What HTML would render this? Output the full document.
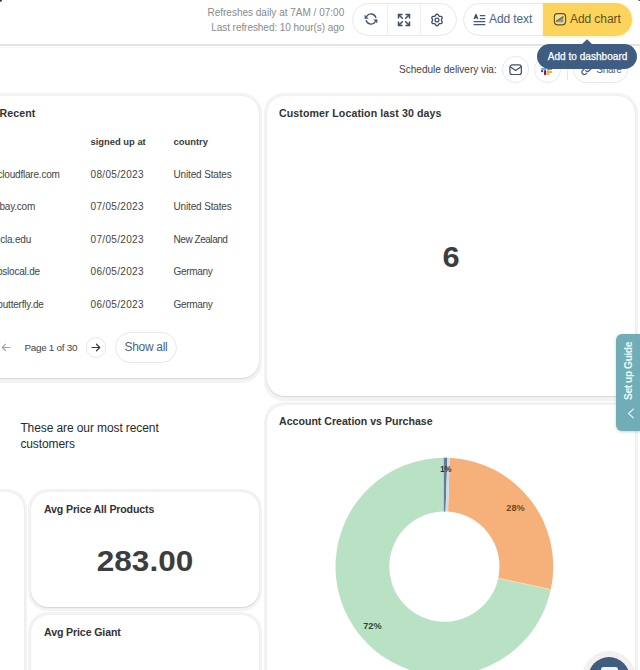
<!DOCTYPE html>
<html>
<head>
<meta charset="utf-8">
<title>Dashboard</title>
<style>
*{box-sizing:border-box;margin:0;padding:0}
html,body{width:640px;height:670px;overflow:hidden;background:#fff}
body{font-family:"Liberation Sans",sans-serif;color:#3a3a3a;position:relative}
.abs{position:absolute;white-space:nowrap}
.card{position:absolute;background:#f3f3f3;border-radius:20px}
.card::after{content:"";position:absolute;left:3.1px;top:3px;right:3.1px;bottom:4.7px;border-radius:17px;background:#fff;box-shadow:0 1px 1.1px rgba(0,0,0,.115),0 0 .9px rgba(0,0,0,.1)}
.pill{position:absolute;border:1px solid #e6e8ec;background:#fff;border-radius:17px}
.t{position:absolute;white-space:nowrap;line-height:1}
.b{font-weight:bold}
.cell{font-size:10px;color:#444}
.c1{letter-spacing:-.2px}
.c2{letter-spacing:.33px;left:90.5px}
.c3{letter-spacing:-.15px;left:173.5px}
.hd{font-size:9.4px;font-weight:bold;color:#3a3a3a;letter-spacing:0}
.ttl{font-size:10.6px;font-weight:bold;color:#333;letter-spacing:.1px}
</style>
</head>
<body>

<!-- header -->
<div class="t" style="right:295.8px;top:8.4px;font-size:10px;color:#8a8a8a;letter-spacing:0">Refreshes daily at 7AM / 07:00</div>
<div class="t" style="right:295.8px;top:22.6px;font-size:10px;color:#8a8a8a;letter-spacing:-.05px">Last refreshed: 10 hour(s) ago</div>

<div class="pill" style="left:351.5px;top:3px;width:105.5px;height:33px"></div>
<div class="abs" style="left:387px;top:3.5px;width:1px;height:32px;background:#eceef1"></div>
<div class="abs" style="left:419.8px;top:3.5px;width:1px;height:32px;background:#eceef1"></div>

<!-- refresh icon -->
<svg class="abs" style="left:363.05px;top:11.2px" width="16" height="16" viewBox="-8 -8 16 16" fill="none" stroke="#3d516b" stroke-width="1.3" stroke-linecap="round">
  <path d="M4.85 -1.35A5 5 0 0 0 -4.3 -2.55"/>
  <path d="M-4.85 1.55A5 5 0 0 0 4.3 2.6"/>
  <path d="M-6.15 -3.5V-.5H-3.1Z" fill="#3d516b" stroke="#3d516b" stroke-width=".5" stroke-linejoin="round"/>
  <path d="M6.15 3.6V.7H3.1Z" fill="#3d516b" stroke="#3d516b" stroke-width=".5" stroke-linejoin="round"/>
</svg>
<!-- expand icon -->
<svg class="abs" style="left:397.1px;top:12.8px" width="14" height="14" viewBox="-7 -7 14 14" fill="none" stroke="#3d516b" stroke-width="1.5" stroke-linecap="butt" stroke-linejoin="miter">
  <path d="M-5.5 -1.4V-5.5H-1.4M-5.5 -5.5L-1.2 -1.2"/>
  <path d="M5.5 -1.4V-5.5H1.4M5.5 -5.5L1.2 -1.2"/>
  <path d="M-5.5 1.4V5.5H-1.4M-5.5 5.5L-1.2 1.2"/>
  <path d="M5.5 1.4V5.5H1.4M5.5 5.5L1.2 1.2"/>
</svg>
<!-- gear icon -->
<svg class="abs" style="left:429px;top:11.9px" width="16" height="16" viewBox="-8 -8 16 16" fill="none" stroke="#3d516b" stroke-width="1.3" stroke-linejoin="round">
  <circle cx="0" cy="0" r="1.9"/>
  <path d="M4.42 0.00L4.44 0.29L4.51 0.59L4.63 0.92L4.93 1.32L5.19 1.76L5.22 2.16L5.16 2.54L5.01 2.89L4.78 3.19L4.48 3.44L4.12 3.61L3.61 3.61L3.11 3.55L2.77 3.61L2.47 3.70L2.21 3.83L1.97 3.99L1.74 4.20L1.52 4.47L1.32 4.93L1.07 5.38L0.74 5.60L0.38 5.74L0.00 5.78L-0.38 5.74L-0.74 5.60L-1.07 5.38L-1.32 4.93L-1.52 4.47L-1.74 4.20L-1.97 3.99L-2.21 3.83L-2.47 3.70L-2.77 3.61L-3.11 3.55L-3.61 3.61L-4.12 3.61L-4.48 3.44L-4.78 3.19L-5.01 2.89L-5.16 2.54L-5.22 2.16L-5.19 1.76L-4.93 1.32L-4.63 0.92L-4.51 0.59L-4.44 0.29L-4.42 0.00L-4.44 -0.29L-4.51 -0.59L-4.63 -0.92L-4.93 -1.32L-5.19 -1.76L-5.22 -2.16L-5.16 -2.54L-5.01 -2.89L-4.78 -3.19L-4.48 -3.44L-4.12 -3.61L-3.61 -3.61L-3.11 -3.55L-2.77 -3.61L-2.47 -3.70L-2.21 -3.83L-1.97 -3.99L-1.74 -4.20L-1.52 -4.47L-1.32 -4.93L-1.07 -5.38L-0.74 -5.60L-0.38 -5.74L-0.00 -5.78L0.38 -5.74L0.74 -5.60L1.07 -5.38L1.32 -4.93L1.52 -4.47L1.74 -4.20L1.97 -3.99L2.21 -3.83L2.47 -3.70L2.77 -3.61L3.11 -3.55L3.61 -3.61L4.12 -3.61L4.48 -3.44L4.78 -3.19L5.01 -2.89L5.16 -2.54L5.22 -2.16L5.19 -1.76L4.93 -1.32L4.63 -0.92L4.51 -0.59L4.44 -0.29Z"/>
</svg>

<!-- add text / add chart -->
<div class="pill" style="left:462.5px;top:3px;width:150px;height:33px"></div>
<div class="abs" style="left:543.4px;top:3.3px;width:88.4px;height:33.1px;background:#fdd45b;border-radius:0 16.5px 16.5px 0;border-left:1.6px solid #ddd3b6;box-shadow:0 .5px 3px rgba(253,212,91,.55)"></div>
<div class="abs" style="left:638.2px;top:-1.8px;width:4px;height:3px;border-radius:50%;background:#4a4a4a"></div>
<div class="abs" style="left:-2px;top:-2px;width:3.6px;height:3.6px;border-radius:50%;background:#4a4a4a"></div>
<div class="abs" style="left:-2px;top:668.4px;width:3.6px;height:3.6px;border-radius:50%;background:#4a4a4a"></div>
<svg class="abs" style="left:473px;top:13px" width="13" height="13" viewBox="473 13 13 13" fill="none" stroke="#3f5a7c" stroke-width="1.25" stroke-linecap="butt">
  <path d="M479.8 15.5H485.3M479.8 18.5H485.3M473.6 21.5H485.3M473.6 24.5H485.3"/>
  <path d="M474.25 18.9L475.95 14.55L477.65 18.9M474.9 17.5H477" stroke-width="1.4" stroke="#46505e" stroke-linejoin="round"/>
</svg>
<div class="t" style="left:489px;top:13px;font-size:12px;color:#4a6585;letter-spacing:-.1px">Add text</div>
<!-- chart icon -->
<svg class="abs" style="left:553px;top:12px" width="14" height="14" viewBox="553 12 14 14" fill="none">
  <rect x="554.4" y="13.65" width="11.2" height="11.2" rx="3" fill="#f0dd98" stroke="#67510f" stroke-width="1.15"/>
  <path d="M556.4 22.3L563.3 17V22.3Z" fill="#8d9496"/>
  <path d="M556.3 21.3L563.1 16.7" stroke="#76580c" stroke-width="1.15" stroke-linecap="round"/>
</svg>
<div class="t" style="left:570px;top:13px;font-size:12px;color:#5c5126;letter-spacing:-.08px">Add chart</div>

<!-- header border -->
<div class="abs" style="left:0;top:44px;width:640px;height:2px;background:#e5e5e5"></div>
<div class="abs" style="left:0;top:47px;width:640px;height:1px;background:#f6f7f9"></div>

<!-- schedule row -->
<div class="t" style="left:399px;top:65.1px;font-size:10.1px;color:#444;letter-spacing:-.02px">Schedule delivery via:</div>
<div class="pill" style="left:502px;top:56px;width:26.5px;height:26.5px;border-radius:50%"></div>
<svg class="abs" style="left:508.5px;top:63.8px" width="13.3" height="11.6" viewBox="0 0 29 25" fill="none" stroke="#42536b" stroke-width="2.800" stroke-linejoin="round" stroke-linecap="round">
  <rect x="2" y="2" width="25" height="21" rx="5"/>
  <path d="M3.500 6.500L14.500 14l11-7.500"/>
</svg>
<div class="pill" style="left:534px;top:56px;width:26.5px;height:26.5px;border-radius:50%"></div>
<!-- slack-ish logo -->
<svg class="abs" style="left:541px;top:64.3px" width="11.3" height="11.3" viewBox="0 0 26 26">
  <rect x="9" y="0" width="5" height="12" rx="2.500" fill="#36c5f0"/>
  <rect x="0" y="9" width="12" height="5" rx="2.500" fill="#36c5f0"/>
  <rect x="14" y="0" width="5" height="5" rx="2.500" fill="#2eb67d"/>
  <rect x="14" y="9" width="12" height="5" rx="2.500" fill="#2eb67d"/>
  <rect x="0" y="14" width="5" height="5" rx="2.500" fill="#8f1442"/>
  <rect x="7" y="14" width="5" height="12" rx="2.500" fill="#8f1442"/>
  <rect x="14" y="14" width="5" height="12" rx="2.500" fill="#ecb22e"/>
  <rect x="14" y="16" width="12" height="5" rx="2.500" fill="#ecb22e"/>
</svg>
<div class="abs" style="left:567px;top:60px;width:1px;height:20px;background:#e8e8e8"></div>
<div class="pill" style="left:573px;top:56px;width:55px;height:26.5px;border-radius:14px"></div>
<svg class="abs" style="left:581.2px;top:63.7px" width="11.5" height="11.5" viewBox="0 0 24 24" fill="none" stroke="#4a6585" stroke-width="2.800" stroke-linecap="round">
  <path d="M10 14a5 5 0 0 0 7 0l4-4a5 5 0 0 0-7-7l-1.500 1.500"/><path d="M14 10a5 5 0 0 0-7 0l-4 4a5 5 0 0 0 7 7l1.500-1.500"/>
</svg>
<div class="t" style="left:596.3px;top:65px;font-size:10px;color:#4a6585;letter-spacing:-.3px">Share</div>

<!-- tooltip -->
<div class="abs" style="left:537px;top:43.500px;width:100px;height:25.500px;border-radius:13px;background:#3f5d82"></div>
<svg class="abs" style="left:581px;top:38.500px" width="12" height="6" viewBox="0 0 12 6"><path d="M0 6L6 .3 12 6z" fill="#3f5d82"/></svg>
<div class="t" style="left:547.8px;top:51.7px;font-size:10px;color:#fff;letter-spacing:.04px;-webkit-text-stroke:.25px #fff">Add to dashboard</div>

<!-- cards -->
<div class="card" style="left:-30px;top:93px;width:292.3px;height:289.7px"></div>
<div class="card" style="left:263.9px;top:93px;width:374.1px;height:307.6px"></div>
<div class="card" style="left:263.9px;top:401.5px;width:374.1px;height:318.5px"></div>
<div class="card" style="left:-30px;top:489px;width:56.6px;height:231.0px"></div>
<div class="card" style="left:28.1px;top:489px;width:234.2px;height:122.4px"></div>
<div class="card" style="left:28.1px;top:612.1px;width:234.2px;height:127.9px"></div>

<!-- recent table -->
<div class="t ttl" style="left:-.5px;top:108px">Recent</div>
<div class="t hd" style="left:90.500px;top:137px">signed up at</div>
<div class="t hd" style="left:173.500px;top:137px">country</div>

<div class="t cell c1" style="right:580.3px;top:169.5px">cloudflare.com</div>
<div class="t cell c2" style="top:169.5px">08/05/2023</div>
<div class="t cell c3" style="top:169.5px">United States</div>

<div class="t cell c1" style="right:604.9px;top:202px">ebay.com</div>
<div class="t cell c2" style="top:202px">07/05/2023</div>
<div class="t cell c3" style="top:202px">United States</div>

<div class="t cell c1" style="right:609.0px;top:234.5px">ucla.edu</div>
<div class="t cell c2" style="top:234.5px">07/05/2023</div>
<div class="t cell c3" style="top:234.5px;letter-spacing:-.45px">New Zealand</div>

<div class="t cell c1" style="right:600.1px;top:267px">pslocal.de</div>
<div class="t cell c2" style="top:267px">06/05/2023</div>
<div class="t cell c3" style="top:267px;letter-spacing:-.33px">Germany</div>

<div class="t cell c1" style="right:596.3px;top:299.5px">butterfly.de</div>
<div class="t cell c2" style="top:299.5px">06/05/2023</div>
<div class="t cell c3" style="top:299.5px;letter-spacing:-.33px">Germany</div>

<!-- pagination -->
<svg class="abs" style="left:1px;top:343px" width="10" height="9" viewBox="0 0 20 18" fill="none" stroke="#a5a5a5" stroke-width="2.200" stroke-linecap="round" stroke-linejoin="round"><path d="M18 9H3M9 2.500L2.500 9 9 15.500"/></svg>
<div class="t" style="left:24.4px;top:342.8px;font-size:9.9px;color:#444;letter-spacing:-.27px">Page 1 of 30</div>
<div class="pill" style="left:85.7px;top:337.3px;width:20.5px;height:20.5px;border-radius:50%"></div>
<svg class="abs" style="left:91px;top:343px" width="10" height="9" viewBox="0 0 20 18" fill="none" stroke="#3c3c3c" stroke-width="2.400" stroke-linecap="round" stroke-linejoin="round"><path d="M2 9h15M11 2.500L17.500 9 11 15.500"/></svg>
<div class="pill" style="left:114.500px;top:331.500px;width:62px;height:31.500px;border-radius:16px"></div>
<div class="t" style="left:124.6px;top:341.4px;font-size:12px;color:#4a6585;letter-spacing:-.33px">Show all</div>

<!-- customer location -->
<div class="t ttl" style="left:279px;top:108px">Customer Location last 30 days</div>
<div class="t b" style="left:451.1px;top:242.3px;font-size:29.3px;color:#3d3d3d;transform:translateX(-50%) scaleX(1.05)">6</div>

<!-- note text -->
<div class="t" style="left:20.4px;top:421.8px;font-size:12px;color:#2a2a2a;letter-spacing:-.1px">These are our most recent</div>
<div class="t" style="left:20.4px;top:437.8px;font-size:12px;color:#2a2a2a;letter-spacing:-.1px">customers</div>

<!-- avg price -->
<div class="t ttl" style="left:44px;top:504px;letter-spacing:-.15px">Avg Price All Products</div>
<div class="t b" style="left:145.3px;top:546.3px;font-size:29.3px;color:#3d3d3d;transform:translateX(-50%) scaleX(1.075)">283.00</div>
<div class="t ttl" style="left:44px;top:627px;letter-spacing:-.12px">Avg Price Giant</div>

<!-- donut -->
<div class="t ttl" style="left:279px;top:416.3px;letter-spacing:0">Account Creation vs Purchase</div>
<svg class="abs" style="left:263.500px;top:401px" width="374.500" height="269" viewBox="263.500 401 374.500 269">
  <path d="M550.36 589.52A108.9 108.9 0 1 1 443.80 457.70L443.80 511.50A55.1 55.1 0 1 0 497.77 578.20Z" fill="#b9e2c4"/>
<path d="M449.15 457.83A108.9 108.9 0 0 1 550.36 589.52L497.77 578.20A55.1 55.1 0 0 0 447.55 511.58Z" fill="#f6b079"/>
<path d="M443.80 457.70A108.9 108.9 0 0 1 446.85 457.74L445.05 511.51A55.1 55.1 0 0 0 443.80 511.50Z" fill="#5f7b9b"/>
<path d="M446.85 457.74A108.9 108.9 0 0 1 449.15 457.83L447.55 511.58A55.1 55.1 0 0 0 445.05 511.51Z" fill="#d0dbe9"/>
<path d="M550.36 589.52L497.77 578.20" stroke="#fbe3cf" stroke-width=".7"/>
<path d="M443.80 457.70L443.80 511.50" stroke="#445c7a" stroke-width=".6"/>

<g font-family="Liberation Sans, sans-serif" font-weight="bold" font-size="9.2" text-anchor="middle">
<text x="445.3" y="471.5" fill="#2c3036" textLength="11.2" lengthAdjust="spacingAndGlyphs">1%</text>
<text x="515" y="511.1" fill="#6e4a20">28%</text>
<text x="371.9" y="629.3" fill="#2e4638">72%</text>
</g>
</svg>

<!-- set up guide -->
<div class="abs" style="left:616.300px;top:334px;width:30px;height:96.500px;background:#70adb6;border-radius:6px;box-shadow:0 1px 3px rgba(80,140,150,.35)"></div>
<div class="t b" style="left:629.3px;top:371.2px;font-size:10.2px;color:#e8fdff;transform:translate(-50%,-50%) rotate(-90deg);letter-spacing:-.42px">Set up Guide</div>
<svg class="abs" style="left:627px;top:407.500px" width="8" height="11" viewBox="0 0 8 11" fill="none" stroke="#d8f6fa" stroke-width="1.100" stroke-linecap="round" stroke-linejoin="round"><path d="M6.500 1L1.500 5.500 6.500 10"/></svg>

<!-- chat bubble -->
<div class="abs" style="left:582.2px;top:650.6px;width:54.2px;height:54.2px;border-radius:50%;background:#f1f1f1"></div>
<div class="abs" style="left:589.3px;top:657.7px;width:40px;height:40px;border-radius:50%;background:#3f5d82;box-shadow:0 0 0 .9px #4d5560"></div>
<div class="abs" style="left:601.2px;top:667.2px;width:17px;height:10px;border-radius:2.5px;background:#eaf6ff"></div>

</body>
</html>
